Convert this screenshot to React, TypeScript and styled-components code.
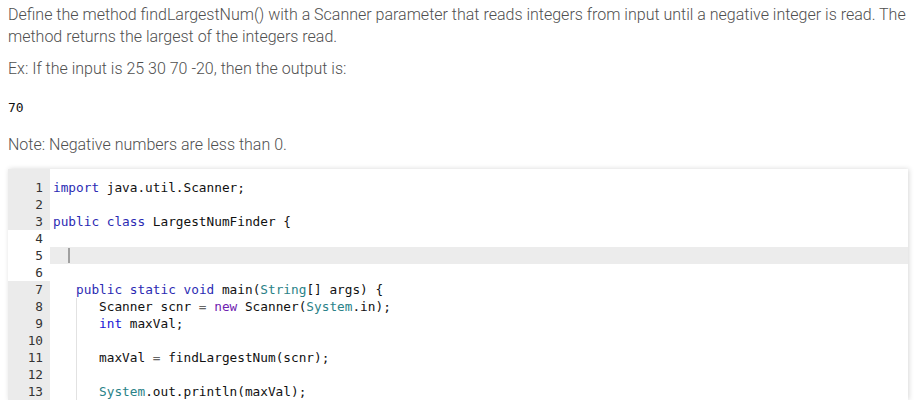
import React from "react"
import styled, { createGlobalStyle } from "styled-components"

const GlobalStyle = createGlobalStyle`
  body {
    margin: 0;
    background: #ffffff;
  }
`

type Tok = [string, string?]

const lines: { code: Tok[]; editable?: boolean; active?: boolean; guide?: boolean; cursor?: boolean }[] = [
  { code: [["import", "kw"], [" java.util.Scanner;"]] },
  { code: [] },
  { code: [["public", "kw"], [" "], ["class", "kw"], [" LargestNumFinder {"]] },
  { code: [], editable: true },
  { code: [["  "]], editable: true, active: true, cursor: true },
  { code: [], editable: true },
  {
    code: [
      ["   "],
      ["public", "kw"],
      [" "],
      ["static", "kw"],
      [" "],
      ["void", "kw"],
      [" main("],
      ["String", "cls"],
      ["[] args) {"],
    ],
  },
  {
    code: [
      ["      Scanner scnr "],
      ["=", "op"],
      [" "],
      ["new", "new"],
      [" Scanner("],
      ["System", "cls"],
      [".in);"],
    ],
    guide: true,
  },
  { code: [["      "], ["int", "type"], [" maxVal;"]], guide: true },
  { code: [], guide: true },
  { code: [["      maxVal "], ["=", "op"], [" findLargestNum(scnr);"]], guide: true },
  { code: [], guide: true },
  { code: [["      "], ["System", "cls"], [".out.println(maxVal);"]], guide: true },
]

export default function App() {
  return (
    <>
      <GlobalStyle />
      <Page>
        <Para>
          Define the method findLargestNum() with a Scanner parameter that reads integers from input until a
          negative integer is read. The method returns the largest of the integers read.
        </Para>
        <Para $top={11}>Ex: If the input is 25 30 70 -20, then the output is:</Para>
        <Output>70</Output>
        <Para $top={16}>Note: Negative numbers are less than 0.</Para>
        <Editor>
          <Gutter $editable={false} $pad />
          <Code $active={false} $guide={false} $pad />
          {lines.map((line, i) => (
            <React.Fragment key={i}>
              <Gutter $editable={!!line.editable}>{i + 1}</Gutter>
              <Code $active={!!line.active} $guide={!!line.guide}>
                {line.code.map(([text, kind], j) => (
                  <Token key={j} $kind={kind}>
                    {text}
                  </Token>
                ))}
                {line.cursor && <Cursor />}
              </Code>
            </React.Fragment>
          ))}
        </Editor>
      </Page>
    </>
  )
}

const colors: Record<string, string> = {
  kw: "#2b2bb3",
  new: "#6f22b0",
  type: "#1a1ad6",
  cls: "#2a8288",
  op: "#666666",
}

const Page = styled.div`
  padding: 4px 10px 0 8px;
`

const Para = styled.p<{ $top?: number }>`
  margin: ${(p) => p.$top ?? 0}px 0 0;
  font-family: Roboto, "Noto Sans", sans-serif;
  font-weight: 300;
  font-size: 16px;
  line-height: 21.7px;
  color: #4f4f4f;
`

const Output = styled.pre`
  margin: 18px 0 0;
  font-family: "DejaVu Sans Mono", monospace;
  font-size: 13px;
  line-height: 20px;
  color: #111111;
`

const Editor = styled.div`
  margin-top: 13px;
  display: grid;
  grid-template-columns: 42px 1fr;
  background: #ffffff;
  box-shadow: 1px 0 5px rgba(0, 0, 0, 0.16);
  font-family: "DejaVu Sans Mono", monospace;
  font-size: 12.75px;
`

const Gutter = styled.div<{ $editable: boolean; $pad?: boolean }>`
  height: ${(p) => (p.$pad ? 10 : 17)}px;
  line-height: 17px;
  padding-right: 7px;
  text-align: right;
  color: #333333;
  background: ${(p) => (p.$editable ? "#ffffff" : "#ebebeb")};
`

const Code = styled.div<{ $active: boolean; $guide: boolean; $pad?: boolean }>`
  height: ${(p) => (p.$pad ? 10 : 17)}px;
  line-height: 17px;
  padding-left: 3px;
  white-space: pre;
  color: #111111;
  background-color: ${(p) => (p.$active ? "#ececec" : "transparent")};
  ${(p) =>
    p.$guide &&
    `
    background-image: linear-gradient(#e2e2e2, #e2e2e2);
    background-repeat: no-repeat;
    background-size: 1px 100%;
    background-position: calc(3px + 3ch) 0;
  `}
`

const Token = styled.span<{ $kind?: string }>`
  color: ${(p) => (p.$kind ? colors[p.$kind] : "inherit")};
`

const Cursor = styled.span`
  display: inline-block;
  width: 0;
  height: 15px;
  border-left: 2px solid #a0a0a0;
  vertical-align: -3px;
`
